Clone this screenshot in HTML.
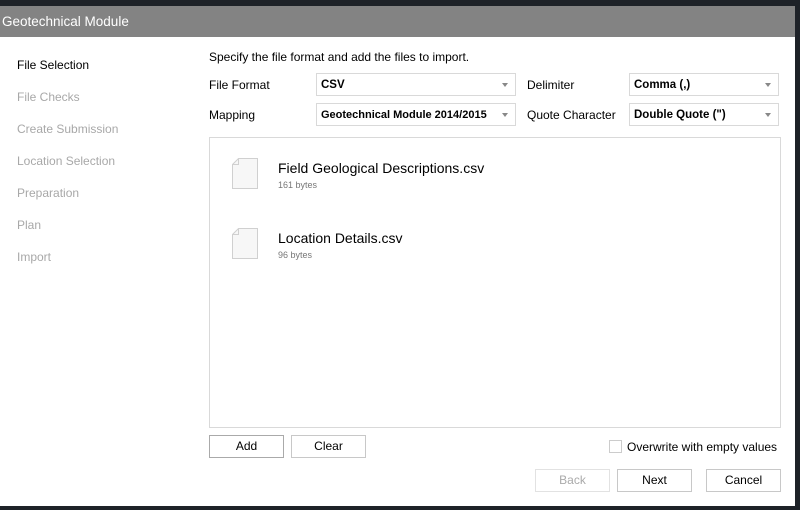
<!DOCTYPE html>
<html><head><style>
body{margin:0;width:800px;height:510px;background:#1e2228;position:relative;overflow:hidden;font-family:"Segoe UI","Liberation Sans",sans-serif;font-size:12px;color:#000}
.dlg{position:absolute;left:0;top:6px;width:795px;height:500px;background:#fff}
.title{position:absolute;left:0;top:0;width:795px;height:31px;background:#838383;color:#fff;font-size:13.5px;line-height:31px;padding-left:2px;box-sizing:border-box}
.side{position:absolute;left:0;top:31px;width:195px;height:469px;background:#fff}
.side div{position:absolute;left:17px;color:#a8a8a8;font-size:12px}
.a{position:absolute}
.dd{position:absolute;height:23px;border:1px solid #d9d9d9;box-sizing:border-box;line-height:23px;padding-left:4px;font-weight:bold;font-size:11.5px;background:#fff;white-space:nowrap}
.dd:after{content:"";position:absolute;right:7px;top:9px;border-left:3.5px solid transparent;border-right:3.5px solid transparent;border-top:4px solid #888}
.btn{position:absolute;height:23px;border:1px solid #c8c8c8;box-sizing:border-box;text-align:center;line-height:21px;background:#fff}
.file{position:absolute;width:26px;height:31px}
</style></head><body>
<div class="dlg">
<div class="title">Geotechnical Module</div>
<div class="side">
<div style="top:21px;color:#000">File Selection</div>
<div style="top:53px">File Checks</div>
<div style="top:85px">Create Submission</div>
<div style="top:117px">Location Selection</div>
<div style="top:149px">Preparation</div>
<div style="top:181px">Plan</div>
<div style="top:213px">Import</div>
</div>
</div>
<div class="a" style="left:209px;top:50px">Specify the file format and add the files to import.</div>
<div class="a" style="left:209px;top:78px">File Format</div>
<div class="dd" style="left:316px;top:73px;width:200px">CSV</div>
<div class="a" style="left:527px;top:78px">Delimiter</div>
<div class="dd" style="left:629px;top:73px;width:150px">Comma (,)</div>
<div class="a" style="left:209px;top:108px">Mapping</div>
<div class="dd" style="left:316px;top:103px;width:200px;font-size:11px">Geotechnical Module 2014/2015</div>
<div class="a" style="left:527px;top:108px">Quote Character</div>
<div class="dd" style="left:629px;top:103px;width:150px">Double Quote (")</div>
<div class="a" style="left:209px;top:137px;width:572px;height:291px;border:1px solid #d9d9d9;box-sizing:border-box"></div>
<svg class="file" style="left:232px;top:158px" viewBox="0 0 26 31"><path d="M6.5 .5H25.5V30.5H.5V6.5Z" fill="#f7f7f7" stroke="#d0d0d0"/><path d="M6.5 .5V6.5H.5" fill="none" stroke="#d0d0d0"/></svg>
<div class="a" style="left:278px;top:160px;font-size:14px">Field Geological Descriptions.csv</div>
<div class="a" style="left:278px;top:180px;font-size:9px;color:#777">161 bytes</div>
<svg class="file" style="left:232px;top:228px" viewBox="0 0 26 31"><path d="M6.5 .5H25.5V30.5H.5V6.5Z" fill="#f7f7f7" stroke="#d0d0d0"/><path d="M6.5 .5V6.5H.5" fill="none" stroke="#d0d0d0"/></svg>
<div class="a" style="left:278px;top:230px;font-size:14px">Location Details.csv</div>
<div class="a" style="left:278px;top:250px;font-size:9px;color:#777">96 bytes</div>
<div class="btn" style="left:209px;top:435px;width:75px;border-color:#aaa">Add</div>
<div class="btn" style="left:291px;top:435px;width:75px">Clear</div>
<div class="a" style="left:609px;top:440px;width:13px;height:13px;border:1px solid #ccc;box-sizing:border-box"></div>
<div class="a" style="left:627px;top:440px">Overwrite with empty values</div>
<div class="btn" style="left:535px;top:469px;width:75px;border-color:#e2e2e2;color:#aaa">Back</div>
<div class="btn" style="left:617px;top:469px;width:75px">Next</div>
<div class="btn" style="left:706px;top:469px;width:75px">Cancel</div>
</body></html>
